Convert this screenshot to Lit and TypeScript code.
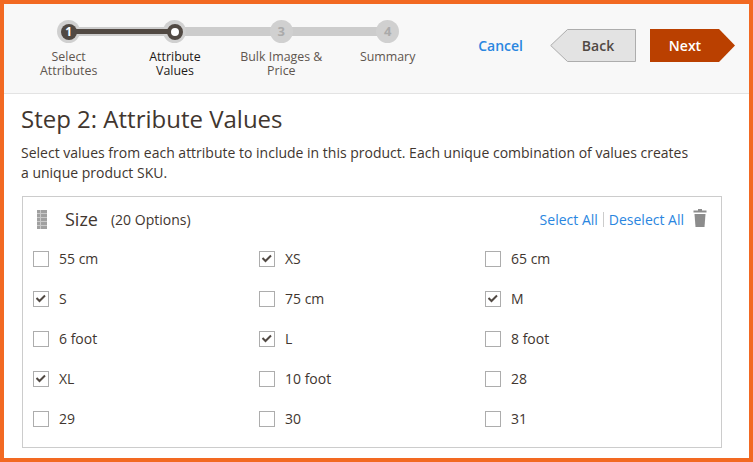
import { LitElement, html, svg, css } from "lit";
import { customElement } from "lit/decorators.js";

const steps = [
  { n: "1", label: ["Select", "Attributes"], cls: "done" },
  { n: "", label: ["Attribute", "Values"], cls: "active" },
  { n: "3", label: ["Bulk Images &", "Price"], cls: "" },
  { n: "4", label: ["Summary"], cls: "last" },
];
const options: [string, boolean][] = [
  ["55 cm", false], ["XS", true], ["65 cm", false],
  ["S", true], ["75 cm", false], ["M", true],
  ["6 foot", false], ["L", true], ["8 foot", false],
  ["XL", true], ["10 foot", false], ["28", false],
  ["29", false], ["30", false], ["31", false],
];

@customElement("app-root")
export class AppRoot extends LitElement {
  static styles = css`
    :host { display: block; width: 753px; height: 462px; box-sizing: border-box; border: 4px solid #f26922; background: #fff; font-family: "Open Sans", sans-serif; color: #41362f; overflow: hidden; }
    .head { display: flex; align-items: flex-start; height: 89px; background: #f8f8f8; border-bottom: 1px solid #e3e3e3; padding-left: 11.5px; }
    .steps { display: flex; padding-top: 16px; isolation: isolate; }
    .step { width: 106.33px; position: relative; display: flex; flex-direction: column; align-items: center; }
    .step::after { content: ""; position: absolute; left: 50%; width: 100%; top: 7px; height: 9px; background: #ccc; z-index: -1; }
    .step.last::after { display: none; }
    .step.done::before { content: ""; position: absolute; left: 50%; width: 100%; top: 9px; height: 5px; background: #514943; z-index: 2; }
    .dot { width: 23px; height: 23px; border-radius: 50%; background: #d0d0d0; color: #aaa; font-size: 13px; font-weight: 700; line-height: 23px; text-align: center; position: relative; }
    .inner { position: absolute; left: 3.5px; top: 3.5px; width: 16px; height: 16px; border-radius: 50%; background: #514943; color: #fff; font-size: 12px; line-height: 16px; z-index: 3; }
    .active .inner { box-sizing: border-box; border: 4px solid #514943; background: #fff; }
    .label { margin-top: 7px; font-size: 12.4px; line-height: 14px; text-align: center; color: #5f564f; white-space: nowrap; }
    .active .label { color: #1f1a17; }
    .actions { display: flex; align-items: center; margin-left: auto; margin-top: 25px; padding-right: 14px; }
    .cancel { color: #2a86e0; font-size: 14px; font-weight: 600; margin-right: 27px; }
    .back { width: 86px; height: 33px; display: block; position: relative; margin-right: 14px; }
    .back svg, .next svg { position: absolute; inset: 0; }
    .btxt { position: relative; display: flex; align-items: center; justify-content: center; height: 33px; font-size: 14px; }
    .back .btxt { padding-left: 10px; color: #514943; font-weight: 600; }
    .next { width: 85px; height: 33px; display: block; position: relative; }
    .next .btxt { padding-right: 15px; color: #fff; font-weight: 600; }
    .body { padding: 0 17px; }
    h1 { margin: 10px 0 0; font-size: 24px; line-height: 30px; font-weight: 400; color: #41362f; }
    .desc { margin: 9px 0 0; width: 672px; font-size: 14px; line-height: 20px; color: #41362f; }
    .card { margin: 13px 0 0 1px; width: 700px; height: 252px; box-sizing: border-box; border: 1px solid #ccc; }
    .card-head { display: flex; align-items: center; height: 44px; padding: 0 14px; }
    .grip { margin-right: 18px; display: block; }
    .title { font-size: 18px; color: #41362f; margin-right: 13px; }
    .count { font-size: 14px; color: #41362f; }
    .links { margin-left: auto; display: flex; align-items: center; font-size: 14px; color: #2a86e0; }
    .sep { width: 1px; height: 15px; background: #ccc; margin: 0 5px; }
    .trash { margin: -3px 0 0 9px; display: block; }
    .grid { display: grid; grid-template-columns: repeat(3, 226px); grid-auto-rows: 40px; padding: 2px 0 0 10px; }
    .opt { display: flex; align-items: flex-start; padding-top: 8px; box-sizing: border-box; font-size: 14px; line-height: 16px; color: #41362f; }
    .box { width: 16px; height: 16px; box-sizing: border-box; border: 1px solid #adadad; background: #fff; margin-right: 10px; display: block; flex: none; }
  `;

  render() {
    return html`
      <div class="head">
        <div class="steps">
          ${steps.map((s) => html`
            <div class="step ${s.cls}">
              <div class="dot">${s.cls === "done" || s.cls === "active" ? html`<div class="inner">${s.n}</div>` : s.n}</div>
              <div class="label">${s.label.map((l) => html`<div>${l}</div>`)}</div>
            </div>`)}
        </div>
        <div class="actions">
          <span class="cancel">Cancel</span>
          <div class="back">
            <svg width="86" height="33" viewBox="0 0 86 33"><path d="M85.5.5H17.5L.7 16.5 17.5 32.5H85.5Z" fill="#e3e3e3" stroke="#adadad"/></svg>
            <div class="btxt">Back</div>
          </div>
          <div class="next">
            <svg width="85" height="33" viewBox="0 0 85 33"><path d="M0 0H69L85 16.5 69 33H0Z" fill="#ba4000"/></svg>
            <div class="btxt">Next</div>
          </div>
        </div>
      </div>
      <div class="body">
        <h1>Step 2: Attribute Values</h1>
        <p class="desc">Select values from each attribute to include in this product. Each unique combination of values creates a unique product SKU.</p>
        <div class="card">
          <div class="card-head">
            <svg class="grip" width="10" height="19" viewBox="0 0 10 19">
              <rect width="10" height="19" fill="#c9c9c9"/>
              ${[0, 4, 8, 12, 16].map((y) => [0, 4, 7].map((x) => svg`<rect x=${x} y=${y} width="3" height="3" fill="#a0a0a0"/>`))}
            </svg>
            <span class="title">Size</span>
            <span class="count">(20 Options)</span>
            <div class="links">
              <span>Select All</span><span class="sep"></span><span>Deselect All</span>
              <svg class="trash" width="14" height="18" viewBox="0 0 14 18" fill="#8c8c8c">
                <path d="M5 0H9V1.5H13.5V3.5H.5V1.5H5Z"/>
                <path d="M1.5 5H12.5L11.5 18H2.5Z"/>
              </svg>
            </div>
          </div>
          <div class="grid">
            ${options.map(([t, c]) => html`
              <div class="opt">
                <svg class="box" width="16" height="16" viewBox="0 0 14 14">
                  ${c ? svg`<path d="M2.5 6 5.5 9 11 3.5" fill="none" stroke="#514943" stroke-width="2"/>` : ""}
                </svg>
                <span>${t}</span>
              </div>`)}
          </div>
        </div>
      </div>
    `;
  }
}
